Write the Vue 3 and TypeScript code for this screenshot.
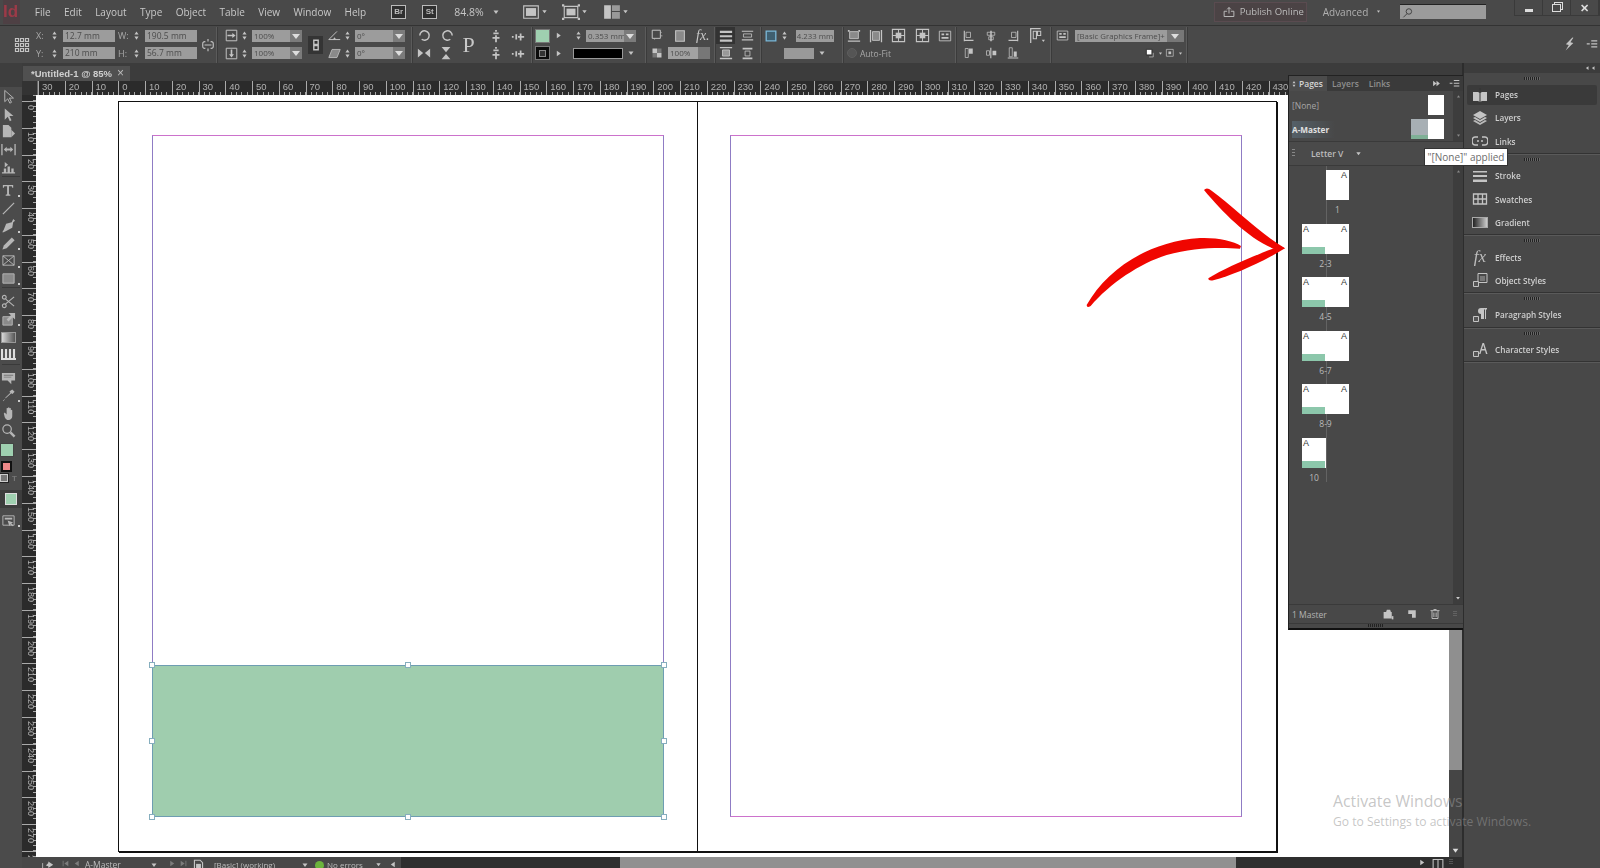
<script setup lang="ts">
import { h, type FunctionalComponent } from 'vue'

type Part = { d: string; fill?: string; stroke?: string; w?: number }
const F = (d: string, fill = 'currentColor'): Part => ({ d, fill })
const S = (d: string, w = 1): Part => ({ d, stroke: 'currentColor', w })

const icons: Record<string, Part[]> = {
  select: [S('M4 1.5v12l3.2-3 2.2 4.6 1.8-.9-2.2-4.5h4.3z')],
  direct: [F('M4 1.5v12l3.2-3 2.2 4.6 1.8-.9-2.2-4.5h4.3z')],
  page: [F('M2 1h6l3 3v10H2z'), F('M11 6l4 4-4 4z')],
  gap: [S('M1 2v12M15 2v12', 1.4), F('M3 8l3-3v2h4V5l3 3-3 3V9H6v2z')],
  collector: [F('M1 13h14v1.5H1z M3 9h2.5v4H3z M7 7h2.5v6H7z M11 9h2.5v4H11z M4 2l3.5 3L4 8z')],
  type: [F('M2 2h11v3h-1l-.5-1.5H8.5V12l1.5.5v1H5v-1l1.5-.5V3.5H3.5L3 5H2z')],
  line: [S('M2 14L14 2', 1.3)],
  pen: [F('M13 1l2 2-2 1.5-1 6L5 14l-3 1.5-.5-.5L5 9 6 8l-3.500 5.500L5.500 6l6-1.500z')],
  pencil: [F('M11.500 1.500l3 3-8.500 8.500-4.500 1.500 1.500-4.500z')],
  frame: [S('M2 3h12v10H2zM2 3l12 10M14 3L2 13')],
  rect: [{ d: 'M2 3h12v10H2z', fill: '#8a8a8a', stroke: 'currentColor', w: 1 }],
  scissors: [S('M5 5.500L14 13M5 10.500L14 3', 1.2), S('M1.500 3.500a2 2 0 1 0 4 0a2 2 0 1 0-4 0M1.500 12.500a2 2 0 1 0 4 0a2 2 0 1 0-4 0', 1.2)],
  free: [{ d: 'M2 5h10v9H2z', fill: '#8a8a8a', stroke: 'currentColor', w: 1 }, F('M8 1h7v7l-2.500-2.500L8 10 6 8l4.500-4.500z')],
  note: [F('M1 2h14v8h-4v4l-4-4H1z'), F('M3 4h10v1H3zM3 6h8v1H3z', '#777')],
  eyedrop: [F('M12 1.500l2.500 2.500-2 2-.5.5-1-1L5 11 2.500 14 2 13.500 5 11l-.5-.5L10 5 9 4l1-1z')],
  hand: [F('M3 8l1-1 2 2V2.500a1 1 0 0 1 1.500 0V7V1.800a1 1 0 0 1 1.500 0V7V2.500a1 1 0 0 1 1.500 0V8V4.500a1 1 0 0 1 1.500 0V11c0 2-1.500 4-4 4H8c-2 0-3-1-4-3z')],
  zoom: [S('M2 6.500a4.500 4.500 0 1 0 9 0a4.500 4.500 0 1 0-9 0', 1.3), S('M10 10l4.500 4.500', 2.600)],
  screen: [S('M2 3h12v10H2z'), F('M4 5h8v2H4z'), F('M7 8l6 2-2 1 2 2-1 1-2-2-1 2z')],
  spin: [F('M5 6.500L8 2l3 4.500zM5 9.500L8 14l3-4.500z')],
  ddown: [F('M3 5h10l-5 7z')],
  play: [F('M5 3l7 5-7 5z')],
  refpt: [S('M1.500 1.500h3v3h-3zM6.500 1.500h3v3h-3zM11.500 1.500h3v3h-3zM1.500 6.500h3v3h-3zM6.500 6.500h3v3h-3zM11.500 6.500h3v3h-3zM1.500 11.500h3v3h-3zM6.500 11.500h3v3h-3zM11.500 11.500h3v3h-3z', 1.200)],
  link: [S('M5 4.500a2 2 0 0 0-3 2v3a2 2 0 0 0 3 2M11 4.500a2 2 0 0 1 3 2v3a2 2 0 0 1-3 2M8 1v3M8 12v3M4 8h8', 1.300)],
  scalex: [S('M1.500 1.500h13v13h-13z', 1.200), F('M3 7h6V5l4 3-4 3V9H3z')],
  scaley: [S('M1.500 1.500h13M1.500 1.500v13h13v-13', 1.200), F('M7 3v6H5l3 4 3-4H9V3z')],
  chain: [S('M5.500 2.500h5v5h-5zM5.500 8.500h5v5h-5z', 1.600)],
  angle: [S('M1 13h14M1 13L11 3', 1.200), F('M6 13l2-3 2 3z')],
  shear: [{ d: 'M5 3h10l-4 10H1z', fill: '#8a8a8a', stroke: 'currentColor', w: 1 }],
  rotcw: [S('M3 8a5 5 0 1 1 2 4', 1.600)],
  rotccw: [S('M13 8a5 5 0 1 0-2 4', 1.600)],
  fliph: [F('M1 3l6 5-6 5zM15 3L9 8l6 5z')],
  flipv: [F('M3 1l5 6 5-6zM3 15l5-6 5 6z')],
  sel1: [F('M7 1h2v2H7zM5 4h6v2H5zM7 7h2v8H7zM4 9h8v2H4z')],
  sel2: [F('M1 8h2v2H1zM5 6h2v6H5zM8 8h7v2H8zM10 5h2v8h-2z')],
  corner: [S('M1.500 1.500h10v10h-10z', 1.200), F('M12 4h1v1h-1zM4 12h1v1H4zM12 8h2v1h-2z')],
  box: [{ d: 'M3 2h10v12H3z', fill: '#8a8a8a', stroke: 'currentColor', w: 1.200 }],
  opac: [F('M2 2h6v6H2zM8 8h6v6H8z'), F('M8 2h6v6H8zM2 8h6v6H2z', '#777')],
  wrap1: [F('M1 2h14v2.500H1zM1 7h14v2.500H1zM1 12h14v2.500H1z')],
  wrap2: [F('M1 2h14v1.500H1zM1 12.500h14V14H1z'), S('M3 6h10v4H3z')],
  wrap3: [F('M1 1h14v1.500H1zM1 13.500h14V15H1z'), { d: 'M4 4.500h8v7H4z', fill: '#999', stroke: 'currentColor', w: 1 }],
  wrap4: [F('M2 1h12v2H2zM2 13h12v2H2z'), S('M5 5h6v6H5z')],
  blueframe: [{ d: 'M2.500 2.500h11v11h-11z', fill: '#3f5f70', stroke: '#7ab8d8', w: 1.500 }],
  fit1: [{ d: 'M3 3h10v8H3z', fill: '#8a8a8a', stroke: 'currentColor', w: 1 }, F('M1 1h2v2H1zM13 1h2v2h-2zM1 13h14v1.500H1z')],
  fit2: [{ d: 'M4 3h8v10H4z', fill: '#8a8a8a', stroke: 'currentColor', w: 1 }, F('M1 1h1.500v14H1zM13.500 1H15v14h-1.500z')],
  fit3: [S('M1.500 1.500h13v13h-13z', 1.200), F('M5 5h6v6H5z'), F('M7.500 2h1v12h-1zM2 7.500h12v1H2z')],
  al1: [F('M1 1h1.500v14H1z M1 13h13v1.500H1z'), S('M4 3h6v7H4z')],
  al2: [F('M7 1h2v14H7z'), S('M3 3h10v4H3zM5 9h6v4H5z')],
  al3: [F('M13.500 1H15v14h-1.500z M2 13h13v1.500H2z'), S('M6 3h6v7H6z')],
  al4: [F('M1 1h10v1.200H1zM1 1h1.200v14H1z'), S('M4 4h3v7H4zM8 4h3v4H8z'), F('M12 12l3 0-1.500 2z')],
  al5: [S('M3 2h4v12H3z'), F('M8 2h5v7H8z')],
  al6: [F('M7 1h1.500v14H7z'), S('M2 5h4v6H2z'), F('M10 5h5v6h-5z')],
  al7: [S('M3 1h4v12H3z'), F('M9 6h4v7H9z M1 14h14v1.200H1z')],
  frametype: [S('M1.500 2.500h13v11h-13z'), F('M4 5h3v2H4zM9 5h3v2H9zM4 9h8v2H4z')],
  fr: [{ d: 'M2 2h8v8H2z', fill: '#fff', stroke: '#111', w: 1 }, S('M12 7v6H6')],
  fr2: [S('M2 2h10v10H2z'), F('M5 5h4v4H5z')],
  bolt: [F('M10 1L5 9h3l-2 6 6-9H9l2-5z')],
  menu: [F('M1 7h4v1.500H1zM7 3h8v1.500H7zM7 7h8v1.500H7zM7 11h8v1.500H7z')],
  forward: [F('M2 3l6 5-6 5zM8 3l6 5-6 5z')],
  share: [S('M1.500 7v7h13V7h-4M5.500 7h-4', 1.200), S('M8 10V2M5.500 4.500L8 2l2.500 2.500', 1.200)],
  search: [S('M6 6.500a4 4 0 1 0 8 0a4 4 0 1 0-8 0M7 10l-5 5', 1.200)],
  pages: [F('M1 5h5l2 1 2-1h5v9h-5l-2 1-2-1H1z'), F('M7.500 1h1v14h-1z', '#333')],
  layers: [F('M8 1l7 4-7 4-7-4z'), F('M1 8l2-1 5 3 5-3 2 1-7 4z'), F('M1 11l2-1 5 3 5-3 2 1-7 4z', '#bbb')],
  links: [S('M6 4H3a2.500 3.500 0 0 0 0 8h3M10 4h3a2.500 3.500 0 0 1 0 8h-3M5 8h2M9 8h2', 1.400)],
  stroke: [F('M1 3h14v1.500H1zM1 7h14v2H1zM1 11.500h14V14H1z')],
  swatches: [S('M1.500 3h13v10h-13zM1.500 8h13M6 3v10M10.500 3v10', 1.300)],
  objstyle: [S('M6 1.500h9v9H6z'), { d: 'M1.500 9.500h5v5h-5z', fill: '#555', stroke: 'currentColor', w: 1 }, F('M8 4h5v5H8z', '#777')],
  parastyle: [F('M9 1h6v1.500h-1V12h-1V2.500h-1V12H9V7a3 3 0 0 1 0-6z'), { d: 'M1.500 9.500h5v5h-5z', fill: '#555', stroke: 'currentColor', w: 1 }],
  charstyle: [F('M10.500 1h1.500l3.500 11H14l-1-3.500H9.500L8.500 12H7zM10 7h2.500L11.250 3z'), { d: 'M1.500 9.500h5v5h-5z', fill: '#555', stroke: 'currentColor', w: 1 }],
  newm: [F('M2 5h3l1-3h4l1 3h1v8H2z'), F('M12 10h2v4h-2z')],
  newp: [F('M2 2h12v12H8V8H2z')],
  trash: [S('M4 4v10h8V4M2 3.500h12M6 2h4M6.500 6v6M9.500 6v6', 1.200)],
  nav: [S('M2 5v9h10v-3'), F('M6 8l3-3V3l6 4-6 4V9z')],
  first: [F('M3 3h1.500v10H3zM13 3L6 8l7 5z')],
  prev: [F('M12 3L5 8l7 5z')],
  next: [F('M4 3l7 5-7 5z')],
  last: [F('M3 3l7 5-7 5zM11.500 3H13v10h-1.500z')],
  doc: [S('M3 1.500h7l3 3v10H3z', 1.400), F('M5 6h6v6H5z')],
  view: [S('M1.500 2h13v12h-13zM8 2v12', 1.400)],
  layout1: [S('M1.500 2.500h13v11h-13z'), F('M3.500 4.500h9v7h-9z')],
  layout2: [S('M2 3h12v10H2z'), F('M4 5h8v6H4z'), F('M0 1h2v2H0zM14 1h2v2h-2zM0 13h2v2H0zM14 13h2v2h-2z')],
  layout3: [F('M1 2h6v12H1z'), F('M8 2h7v5H8zM8 8h7v6H8z', '#999')],
  grip: [F('M1 2h2v2H1zM5 2h2v2H5zM1 6h2v2H1zM5 6h2v2H5zM1 10h2v2H1zM5 10h2v2H5z')],
}

const Ic: FunctionalComponent<{ n: string; s?: number }> = (p) =>
  h(
    'svg',
    { viewBox: '0 0 16 16', width: p.s ?? 13, height: p.s ?? 13, class: 'ic' },
    (icons[p.n] ?? []).map((x) =>
      h('path', { d: x.d, fill: x.fill ?? 'none', stroke: x.stroke ?? 'none', 'stroke-width': x.w ?? 0 }),
    ),
  )
Ic.props = ['n', 's']

const menus = ['File', 'Edit', 'Layout', 'Type', 'Object', 'Table', 'View', 'Window', 'Help']

const hLabels = [30, 20, 10, 0, ...Array.from({ length: 43 }, (_, i) => (i + 1) * 10)]
const vLabels = Array.from({ length: 29 }, (_, i) => i * 10)

const tools: { n?: string; css?: string; gap?: number; corner?: boolean }[] = [
  { n: 'select' }, { n: 'direct' }, { n: 'page' }, { n: 'gap' }, { n: 'collector', gap: 5 },
  { n: 'type', corner: true }, { n: 'line' }, { n: 'pen', corner: true }, { n: 'pencil', corner: true },
  { n: 'frame', corner: true }, { n: 'rect', corner: true, gap: 5 },
  { n: 'scissors' }, { n: 'free', corner: true }, { css: 'tool-grad' }, { css: 'tool-feather', gap: 5 },
  { n: 'note' }, { n: 'eyedrop', corner: true }, { n: 'hand' }, { n: 'zoom' },
]

const spreads = [
  { label: '1', left: false, right: true },
  { label: '2-3', left: true, right: true },
  { label: '4-5', left: true, right: true },
  { label: '6-7', left: true, right: true },
  { label: '8-9', left: true, right: true },
  { label: '10', left: true, right: false },
]

const dockGroups = [
  [{ n: 'pages', t: 'Pages', on: true }, { n: 'layers', t: 'Layers' }, { n: 'links', t: 'Links' }],
  [{ n: 'stroke', t: 'Stroke' }, { n: 'swatches', t: 'Swatches' }, { n: '', t: 'Gradient' }],
  [{ n: 'fx', t: 'Effects' }, { n: 'objstyle', t: 'Object Styles' }],
  [{ n: 'parastyle', t: 'Paragraph Styles' }],
  [{ n: 'charstyle', t: 'Character Styles' }],
]
</script>

<template>
  <div class="app">
    <header class="menubar">
      <span class="logo">Id</span>
      <nav class="menus"><span v-for="m in menus" :key="m">{{ m }}</span></nav>
      <span class="bridge br1">Br</span>
      <span class="bridge br2">St</span>
      <span class="zoomv">84.8%</span>
      <Ic n="ddown" :s="8" class="zoomdd" />
      <span class="lay l1"><Ic n="layout1" :s="18" /><Ic n="ddown" :s="7" /></span>
      <span class="lay l2"><Ic n="layout2" :s="18" /><Ic n="ddown" :s="7" /></span>
      <span class="lay l3"><Ic n="layout3" :s="18" /><Ic n="ddown" :s="7" /></span>
      <span class="publish"><Ic n="share" :s="12" />Publish Online</span>
      <span class="advanced">Advanced</span>
      <Ic n="ddown" :s="5" class="advdd" />
      <span class="search"><Ic n="search" :s="11" /></span>
      <span class="winbtns">
        <span class="win"><i class="w-min"></i></span>
        <span class="win"><i class="w-max"></i></span>
        <span class="win w-close">✕</span>
      </span>
    </header>

    <section class="ctrl">
      <div class="c c-ref"><Ic n="refpt" :s="16" /></div>

      <div class="c c-xy">
        <div class="r"><em>X:</em><Ic n="spin" :s="11" /><span class="fld w52">12.7 mm</span></div>
        <div class="r"><em>Y:</em><Ic n="spin" :s="11" /><span class="fld w52">210 mm</span></div>
      </div>
      <div class="c c-wh">
        <div class="r"><em>W:</em><Ic n="spin" :s="11" /><span class="fld w52">190.5 mm</span></div>
        <div class="r"><em>H:</em><Ic n="spin" :s="11" /><span class="fld w52">56.7 mm</span></div>
      </div>
      <div class="c c-link sep"><Ic n="link" :s="14" /></div>

      <div class="c c-scale">
        <div class="r"><Ic n="scalex" :s="13" /><Ic n="spin" :s="11" /><span class="fld w50 dd">100%</span></div>
        <div class="r"><Ic n="scaley" :s="13" /><Ic n="spin" :s="11" /><span class="fld w50 dd">100%</span></div>
      </div>
      <div class="c c-chain"><span class="chainbox"><Ic n="chain" :s="14" /></span></div>
      <div class="c c-angle sep">
        <div class="r"><Ic n="angle" :s="13" /><Ic n="spin" :s="11" /><span class="fld w50 dd">0°</span></div>
        <div class="r"><Ic n="shear" :s="13" /><Ic n="spin" :s="11" /><span class="fld w50 dd">0°</span></div>
      </div>

      <div class="c c-rot">
        <div class="r"><Ic n="rotcw" :s="15" /><Ic n="rotccw" :s="15" /></div>
        <div class="r"><Ic n="fliph" :s="14" /><Ic n="flipv" :s="14" /></div>
      </div>
      <div class="c c-p"><span class="pee">P</span></div>
      <div class="c c-sel sep">
        <div class="r"><Ic n="sel1" :s="14" /><Ic n="sel2" :s="14" /></div>
        <div class="r"><Ic n="sel1" :s="14" /><Ic n="sel2" :s="14" /></div>
      </div>

      <div class="c c-sw">
        <div class="r"><span class="swatch"></span><Ic n="play" :s="9" /></div>
        <div class="r"><span class="swatch black"><i></i></span><Ic n="play" :s="9" /></div>
      </div>
      <div class="c c-stroke sep">
        <div class="r ind"><Ic n="spin" :s="11" /><span class="fld w50 dd">0.353 mm</span></div>
        <div class="r"><span class="strokebar"></span><Ic n="ddown" :s="8" /></div>
      </div>

      <div class="c c-fx sep">
        <div class="r"><Ic n="corner" :s="13" /><Ic n="box" :s="14" /><span class="fx">fx.</span></div>
        <div class="r"><Ic n="opac" :s="12" /><span class="fld w42 pl">100%</span></div>
      </div>

      <div class="c c-wrap sep">
        <div class="r"><span class="press"><Ic n="wrap1" :s="14" /></span><Ic n="wrap2" :s="13" /></div>
        <div class="r"><span class="pressno"><Ic n="wrap3" :s="14" /></span><Ic n="wrap4" :s="13" /></div>
      </div>

      <div class="c c-inset sep">
        <div class="r"><Ic n="blueframe" :s="14" /><Ic n="spin" :s="11" /><span class="fld w38">4.233 mm</span></div>
        <div class="r ind2"><span class="fld w30 solid"></span><Ic n="ddown" :s="8" /></div>
      </div>

      <div class="c c-fit sep">
        <div class="r"><Ic n="fit1" :s="14" /><Ic n="fit2" :s="14" /><Ic n="fit3" :s="15" /><Ic n="fit3" :s="15" /><Ic n="frametype" :s="14" /></div>
        <div class="r auto"><i class="chk"></i>Auto-Fit</div>
      </div>

      <div class="c c-align sep">
        <div class="r"><Ic n="al1" :s="12" /><Ic n="al2" :s="12" /><Ic n="al3" :s="12" /><Ic n="al4" :s="17" /></div>
        <div class="r"><Ic n="al5" :s="12" /><Ic n="al6" :s="12" /><Ic n="al7" :s="12" /></div>
      </div>

      <div class="c c-style sep">
        <div class="r"><Ic n="frametype" :s="13" /><span class="fld w109">[Basic Graphics Frame]+<i class="ddbox"></i></span></div>
        <div class="r right"><Ic n="fr" :s="11" /><Ic n="ddown" :s="5" /><Ic n="fr2" :s="11" /><Ic n="ddown" :s="5" /></div>
      </div>

      <div class="ctrl-end"><Ic n="bolt" :s="16" /><Ic n="menu" :s="12" /></div>
    </section>

    <main class="body">
      <aside class="tools">
        <div class="tools-grip"></div>
        <div class="tools-list">
          <div v-for="(t, i) in tools" :key="i" class="tool" :class="{ gapped: t.gap, corner: t.corner }">
            <Ic v-if="t.n" :n="t.n" :s="15" />
            <i v-else :class="t.css"></i>
          </div>
          <div class="colors">
            <i class="fillbox"></i>
            <i class="strokemini"></i>
            <div class="fmt"><i></i><b>T</b></div>
          </div>
          <div class="applyc"><i></i></div>
          <div class="tool corner"><Ic n="screen" :s="15" /></div>
        </div>
      </aside>

      <div class="doc">
        <div class="tabband">
          <div class="tab">*Untitled-1 @ 85%<span class="tabx">×</span></div>
        </div>
        <div class="hruler">
          <div class="corner-box"></div>
          <div class="hticks">
            <span v-for="(l, i) in hLabels" :key="i">{{ l }}</span>
          </div>
        </div>
        <div class="work">
          <div class="vruler">
            <span v-for="l in vLabels" :key="l">{{ l }}</span>
          </div>
          <div class="canvas">
            <div class="spread">
              <div class="leaf one">
                <div class="guide">
                  <div class="frame">
                    <i class="hd tl"></i><i class="hd tm"></i><i class="hd tr"></i>
                    <i class="hd ml"></i><i class="hd mr"></i>
                    <i class="hd bl"></i><i class="hd bm"></i><i class="hd br"></i>
                  </div>
                </div>
              </div>
              <div class="leaf two"><div class="guide"></div></div>
            </div>
            <svg class="arrow" viewBox="0 0 720 450" width="240" height="150">
              <path fill="#f00600" d="M80 405C140 300 260 215 420 204C470 202 520 212 543 228L540 236C480 232 400 232 320 255C240 280 150 340 92 408Q80 415 80 405Z" />
              <path fill="#f00600" d="M432 60Q440 50 455 62C520 110 600 190 675 235L650 240C570 210 490 130 432 60Z" />
              <path fill="#f00600" d="M675 235L660 228C600 250 500 290 445 325Q445 334 460 331C520 315 600 280 675 235Z" />
            </svg>
          </div>
          <div class="vscroll">
            <span class="vthumb"></span>
            <Ic n="ddown" :s="9" class="vdown" />
          </div>
        </div>
        <footer class="status">
          <div class="st-left">
            <Ic n="nav" :s="13" class="st-nav" />
            <Ic n="first" :s="9" class="dim" />
            <Ic n="prev" :s="9" class="dim" />
            <span class="st-page">A-Master</span>
            <Ic n="ddown" :s="8" class="st-dd1" />
            <Ic n="next" :s="9" class="dim" />
            <Ic n="last" :s="9" class="dim" />
            <Ic n="doc" :s="13" class="st-doc" />
            <span class="st-prof">[Basic] (working)</span>
            <Ic n="ddown" :s="8" class="st-dd2" />
            <i class="dot"></i>
            <span class="st-err">No errors</span>
            <Ic n="ddown" :s="7" class="st-dd3" />
            <Ic n="prev" :s="9" class="st-lt" />
          </div>
          <div class="st-track"><span class="st-thumb"></span></div>
          <div class="st-right"><Ic n="next" :s="9" /><Ic n="view" :s="12" /><Ic n="grip" :s="8" class="dim" /></div>
        </footer>

        <section class="panel">
          <div class="p-tabs">
            <span class="p-tab on"><Ic n="spin" :s="8" />Pages</span>
            <span class="p-tab">Layers</span>
            <span class="p-tab">Links</span>
            <span class="p-tabs-end"><Ic n="forward" :s="9" /><Ic n="menu" :s="11" /></span>
          </div>
          <div class="p-masters">
            <div class="p-m-list">
              <div class="m-row"><span class="m-none">[None]</span><i class="m-thumb single"></i></div>
              <div class="m-row"><span class="m-a">A-Master</span><i class="m-thumb double"><b></b></i></div>
            </div>
            <div class="p-scroll"><Ic n="ddown" :s="5" class="flip" /><Ic n="ddown" :s="5" /></div>
          </div>
          <div class="p-letter"><span class="lg"></span><span class="lt">Letter V</span><Ic n="ddown" :s="7" /></div>
          <div class="p-list">
            <div class="p-spreads">
              <div v-for="s in spreads" :key="s.label" class="sp">
                <div class="sp-thumb">
                  <div class="pg-slot"><div v-if="s.left" class="pg left"><span>A</span><i></i></div></div>
                  <div class="pg-slot"><div v-if="s.right" class="pg right"><span>A</span></div></div>
                </div>
                <span class="sp-label" :class="{ r: s.label === '1', l: s.label === '10' }">{{ s.label }}</span>
              </div>
            </div>
            <div class="p-scroll big"><Ic n="ddown" :s="5" class="flip" /><Ic n="ddown" :s="6" /></div>
          </div>
          <div class="p-foot">
            <span class="ft">1 Master</span>
            <Ic n="newm" :s="13" /><Ic n="newp" :s="10" /><Ic n="trash" :s="12" /><Ic n="grip" :s="8" class="dim" />
          </div>
          <div class="p-grip"><i></i></div>
          <div class="tip">"[None]" applied</div>
        </section>
      </div>

      <aside class="dock">
        <div class="dock-top"><Ic n="prev" :s="6" /><Ic n="prev" :s="6" /></div>
        <div v-for="(g, i) in dockGroups" :key="i" class="dgroup">
          <div class="dgrip"></div>
          <div v-for="it in g" :key="it.t" class="ditem" :class="{ on: it.on }">
            <span v-if="it.n === 'fx'" class="dfx">fx</span>
            <i v-else-if="!it.n" class="dgrad"></i>
            <Ic v-else :n="it.n" :s="16" />
            <span>{{ it.t }}</span>
          </div>
        </div>
      </aside>
    </main>

    <div class="activate">
      <div class="a1">Activate Windows</div>
      <div class="a2">Go to Settings to activate Windows.</div>
    </div>
  </div>
</template>

<style>
html, body { margin: 0; padding: 0; background: #484848; }
</style>

<style scoped>
.app { width: 1600px; height: 868px; position: relative; overflow: hidden; background: #484848; color: #c6c6c6; font: 10px "Open Sans", "Liberation Sans", sans-serif; display: flex; flex-direction: column; }
.ic { display: block; flex: none; color: #c4c4c4; }
.dim { color: #7c7c7c; }

.menubar { height: 26px; flex: none; display: flex; align-items: center; background: #494949; border-bottom: 1px solid #333; box-sizing: border-box; padding-bottom: 2px; position: relative; filter: blur(.3px); }
.logo { width: 18px; color: #9c3a48; font: 700 17px "Liberation Sans", sans-serif; margin-left: 3px; background: #4e4044; height: 25px; line-height: 25px; overflow: hidden; }
.menus { display: flex; gap: 13.400px; margin-left: 15px; font-size: 10px; color: #c8c8c8; }
.bridge { flex: none; width: 13px; height: 12px; border: 1px solid #bbb; background: #2f2f2f; color: #bbb; font: 700 8px/12px "Liberation Sans", sans-serif; text-align: center; }
.br1 { margin-left: 25px; }
.br2 { margin-left: 16px; }
.zoomv { margin-left: 17px; font-size: 10.500px; }
.zoomdd { margin-left: 8px; }
.lay { display: flex; align-items: center; gap: 1px; }
.l1 { margin-left: 22px; }
.l2 { margin-left: 14px; }
.l3 { margin-left: 15px; }
.publish { margin-left: 585px; width: 93px; height: 20px; box-sizing: border-box; border: 1px solid #5a4b50; background: #4b4345; display: flex; align-items: center; gap: 5px; padding-left: 8px; font-size: 9.500px; color: #bcbcbc; white-space: nowrap; flex: none; }
.advanced { margin-left: 16px; font-size: 10px; color: #b0b0b0; }
.advdd { margin-left: 8px; }
.search { margin-left: 19px; width: 92px; height: 14px; background: #9b9b9b; border-top: 1px solid #222; display: flex; align-items: center; }
.search .ic { color: #333; margin-left: 2px; }
.winbtns { margin-left: 28px; align-self: flex-start; display: flex; height: 15px; border: 1px solid #3a3a3a; border-top: 0; }
.win { width: 27px; height: 15px; border-right: 1px solid #3a3a3a; display: flex; align-items: center; justify-content: center; font-size: 11px; font-weight: 700; color: #ddd; }
.w-min { width: 8px; height: 3px; background: #ddd; margin-top: 5px; }
.w-max { width: 7px; height: 6px; border: 1px solid #ddd; box-shadow: 2px -2px 0 -1px #484848, 2px -2px 0 0 #ddd; }

.ctrl { height: 37px; flex: none; display: flex; align-items: stretch; background: #494949; box-sizing: border-box; padding-top: 1px; filter: blur(.3px); position: relative; }
.c { flex: none; display: flex; flex-direction: column; box-sizing: border-box; }
.r { height: 17.500px; display: flex; align-items: center; gap: 1px; }
.r em { font-style: normal; font-size: 9px; color: #a8a8a8; width: 12px; flex: none; }
.sep { border-right: 1px solid #5b5b5b; box-shadow: 1px 0 0 #3b3b3b; }
.fld { flex: none; box-sizing: border-box; height: 12px; background: #9c9c9c; color: #4d4d4d; font-size: 8.500px; line-height: 12px; padding-left: 2px; white-space: nowrap; overflow: hidden; position: relative; }
.w52 { width: 52px; margin-left: 2px; }
.w50 { width: 50px; margin-left: 1px; }
.w42 { width: 42px; margin-left: 5px; background: linear-gradient(90deg, #a2a2a2 72%, #777 72%); }
.w38 { width: 38px; margin-left: 5px; text-align: center; padding: 0; font-size: 7.800px; }
.w30 { width: 30px; }
.w109 { width: 109px; margin-left: 5px; background: linear-gradient(90deg, #9c9c9c 84%, #777 84%); font-size: 7.800px; }
.solid { background: #999; height: 11px; }
.dd { font-size: 8px; }
.dd::after { content: ""; position: absolute; right: 0; top: 0; width: 12px; height: 12px; background: linear-gradient(#7b7b7b, #7b7b7b); }
.dd::before { content: ""; position: absolute; right: 2px; top: 4px; z-index: 1; border: 4px solid transparent; border-top: 5px solid #ddd; border-bottom: 0; }
.ddbox { position: absolute; right: 5px; top: 4px; border: 4px solid transparent; border-top: 5px solid #ddd; border-bottom: 0; }
.c-ref { width: 36px; align-items: flex-start; justify-content: center; padding-left: 14px; }
.c-xy { width: 80px; }
.c-wh { width: 81px; padding-left: 2px; }
.c-link { width: 20px; justify-content: center; padding-left: 4px; }
.c-scale { width: 91px; padding-left: 8px; }
.c-chain { width: 17px; justify-content: center; }
.chainbox { width: 15px; height: 18px; background: #343434; display: flex; align-items: center; justify-content: center; }
.c-angle { width: 87px; padding-left: 3px; }
.c-rot { width: 48px; padding-left: 5px; }
.c-rot .r { gap: 8px; }
.c-p { width: 17px; align-items: center; justify-content: center; }
.pee { font: 22px "Liberation Serif", serif; color: #c8c8c8; line-height: 22px; }
.c-sel { width: 55px; padding-left: 12px; }
.c-sel .r { gap: 8px; }
.c-sw { width: 41px; padding-left: 3px; }
.c-sw .r { gap: 4px; }
.swatch { width: 15px; height: 14px; background: #9fd0b0; border: 1px solid #777; box-sizing: border-box; flex: none; }
.swatch.black { background: #0c0c0c; display: flex; align-items: center; justify-content: center; }
.swatch.black i { width: 5px; height: 5px; border: 1px solid #888; background: #333; }
.c-stroke { width: 73px; }
.ind { gap: 2px; }
.ind .fld { margin-left: 0; }
.strokebar { width: 48px; height: 9px; background: #000; border: 1px solid #999; margin-right: 3px; }
.c-fx { width: 69px; padding-left: 5px; }
.c-fx .r { gap: 9px; }
.c-fx .r + .r { gap: 0; }
.fx { font: italic 14px "Liberation Serif", serif; color: #c8c8c8; }
.pl { font-size: 8px; }
.c-wrap { width: 46px; padding-left: 1px; }
.c-wrap .r { gap: 6px; }
.press { width: 19px; height: 17px; background: #333; display: flex; align-items: center; justify-content: center; }
.pressno { width: 19px; height: 17px; display: flex; align-items: center; justify-content: center; }
.c-inset { width: 82px; padding-left: 3px; }
.ind2 { padding-left: 20px; gap: 4px; }
.c-fit { width: 113px; padding-left: 4px; }
.c-fit .r { gap: 8.200px; }
.auto { gap: 3px !important; font-size: 8.500px; color: #a8a8a8; }
.chk { width: 8px; height: 8px; border-radius: 50%; background: #555; border: 1px solid #5e5e5e; }
.c-align { width: 95px; padding-left: 7px; }
.c-align .r { gap: 10px; }
.c-style { width: 136px; padding-left: 5px; }
.right { justify-content: flex-end; padding-right: 3px; gap: 2px; }
.ctrl-end { margin-left: auto; display: flex; align-items: center; gap: 9px; padding-right: 2px; padding-bottom: 3px; }
.ctrl-end .ic:first-child { transform: rotate(12deg); }

.body { flex: 1; display: flex; min-height: 0; }
.tools { width: 22px; flex: none; background: #4b4b4b; display: flex; flex-direction: column; filter: blur(.3px); }
.tools .ic { color: #b6b6b6; }
.tools-grip { height: 24px; flex: none; background: #3e3e3e; }
.tools-list { display: flex; flex-direction: column; margin-top: 1px; }
.tool { height: 17.600px; flex: none; display: flex; align-items: center; justify-content: center; position: relative; padding-right: 5px; }
.tool.gapped { margin-bottom: 5.800px; box-shadow: 0 3px 0 -2px #3a3a3a; }
.tool.corner::after { content: ""; position: absolute; right: 2px; bottom: 2px; width: 2px; height: 2px; background: #ccc; }
.tool-grad { width: 15px; height: 11px; background: linear-gradient(90deg, #d8d8d8, #555); border: 1px solid #999; box-sizing: border-box; }
.tool-feather { width: 15px; height: 11px; background: repeating-linear-gradient(90deg, #ddd 0 2px, #555 2px 4px); border-bottom: 2px solid #ddd; box-sizing: border-box; }
.colors { display: flex; flex-direction: column; height: 42px; margin-top: 3px; }
.fillbox { width: 12px; height: 12px; background: #9fd0b0; border: 1px solid #444; margin-left: 0; }
.strokemini { width: 7px; height: 7px; background: #e88; border: 2px solid #111; margin: 4px 0 0 1px; }
.fmt { display: flex; align-items: center; gap: 4px; margin-top: 2px; }
.fmt i { width: 6px; height: 6px; border: 1px solid #ccc; background: #777; box-shadow: 0 0 0 1px #222; }
.fmt b { font: 700 8px "Liberation Sans", sans-serif; color: #777; }
.applyc { height: 18px; background: #3d3d3d; display: flex; align-items: center; justify-content: center; margin-top: 5px; }
.applyc i { width: 10px; height: 10px; background: #9fd0b0; border: 1px solid #ddd; }
.applyc + .tool { margin-top: 4px; }

.doc { flex: 1; min-width: 0; display: flex; flex-direction: column; position: relative; }
.tabband { height: 18px; flex: none; background: #3c3c3c; display: flex; align-items: flex-end; padding-left: 1px; }
.tab { width: 107px; height: 15px; background: #505050; color: #d0d0d0; font: 700 9.500px/15px "Liberation Sans", sans-serif; padding-left: 8px; box-sizing: border-box; white-space: nowrap; position: relative; filter: blur(.3px); }
.tabx { position: absolute; right: 6px; top: 0; color: #bbb; font-weight: 400; font-size: 12px; line-height: 14px; }

.hruler { height: 14px; flex: none; display: flex; background: #2b2b2b; overflow: hidden; }
.corner-box { width: 16px; flex: none; background: #333; box-shadow: inset -1px 0 0 #666; }
.hticks { display: flex; flex: 1; min-width: 0; background: repeating-linear-gradient(90deg, #aaa 0 1px, transparent 1px 5.350px) 0 100% / 100% 3px no-repeat; filter: blur(.3px); }
.hticks span { flex: none; width: 26.750px; box-sizing: border-box; border-left: 1px solid #aaa; padding-left: 3px; font: 9.500px/12px "Liberation Sans", sans-serif; color: #b0b0b0; }

.work { flex: 1; min-height: 0; display: flex; }
.vruler { width: 14px; flex: none; background: #2b2b2b repeating-linear-gradient(180deg, #aaa 0 1px, transparent 1px 5.358px) 100% 0 / 3px 100% no-repeat; padding-top: 6px; box-sizing: border-box; overflow: hidden; display: flex; flex-direction: column; filter: blur(.3px); }
.vruler span { flex: none; height: 26.790px; box-sizing: border-box; border-top: 1px solid #aaa; padding-top: 3px; writing-mode: vertical-rl; font: 9px/11px "Liberation Sans", sans-serif; color: #b0b0b0; }
.canvas { flex: 1; min-width: 0; background: #fff; position: relative; overflow: hidden; }
.spread { position: absolute; left: 82px; top: 6px; width: 1159px; height: 751px; box-sizing: border-box; border: 1px solid #111; box-shadow: 1px 1px 0 #111; display: flex; }
.leaf { box-sizing: border-box; display: flex; padding: 33px 33px 34px 33px; }
.leaf.one { width: 579px; border-right: 1px solid #111; }
.leaf.two { flex: 1; padding-left: 32px; padding-right: 34px; }
.guide { flex: 1; box-sizing: border-box; border: 1px solid #cc72cc; border-left-color: #8f7cc4; border-right-color: #8f7cc4; display: flex; flex-direction: column; justify-content: flex-end; }
.frame { height: 152px; margin: -1px; background: #9fcdae; border: 1.500px solid #6e9db2; box-sizing: border-box; position: relative; }
.hd { position: absolute; width: 6px; height: 6px; box-sizing: border-box; background: #fff; border: 1px solid #86aebe; }
.tl { left: -4px; top: -4px; } .tm { left: 50%; top: -4px; margin-left: -3px; } .tr { right: -4px; top: -4px; }
.ml { left: -4px; top: 50%; margin-top: -3px; } .mr { right: -4px; top: 50%; margin-top: -3px; }
.bl { left: -4px; bottom: -4px; } .bm { left: 50%; bottom: -4px; margin-left: -3px; } .br { right: -4px; bottom: -4px; }
.arrow { position: absolute; left: 1024px; top: 75px; }
.vscroll { width: 13px; flex: none; background: #454545; position: relative; }
.vthumb { position: absolute; left: 0; right: 0; top: 535px; height: 140px; background: #8f8f8f; }
.vdown { position: absolute; left: 2px; bottom: 2px; color: #ddd; }

.status { height: 11px; flex: none; display: flex; overflow: hidden; background: #2f2f2f; filter: blur(.25px); }
.st-left { width: 379px; flex: none; display: flex; align-items: flex-start; background: #484848; font-size: 8.500px; padding-top: 2px; box-sizing: border-box; padding-left: 19px; position: relative; color: #bdbdbd; }
.st-left > * { flex: none; }
.st-nav { margin-right: 7px; }
.st-left .dim { margin-right: 2px; }
.st-page { margin-left: 2px; width: 65px; line-height: 11px; }
.st-dd1 { margin: 2px 10px 0 0; }
.st-doc { margin: 0 9px 0 2px; }
.st-prof { width: 84px; line-height: 11px; font-size: 8px; }
.st-dd2 { margin: 2px 6px 0 3px; }
.dot { width: 9px; height: 9px; border-radius: 50%; background: #6cb43c; margin-top: 2px; }
.st-err { margin-left: 1px; width: 50px; padding-left: 2px; line-height: 11px; box-sizing: border-box; font-size: 8px; }
.st-dd3 { margin-top: 2px; }
.st-lt { margin-left: 6px; margin-top: 1px; }
.st-track { flex: 1; background: #2f2f2f; padding-left: 219px; }
.st-thumb { display: block; width: 616px; height: 11px; background: #909090; }
.st-right { width: 44px; flex: none; display: flex; align-items: flex-start; gap: 5px; padding-top: 1px; box-sizing: border-box; margin-left: -2px; }

.panel { position: absolute; z-index: 3; left: 1266px; top: 12px; width: 175px; height: 555px; background: #484848; box-sizing: border-box; border-left: 1px solid #222; border-bottom: 2px solid #111; border-top: 1px solid #222; display: flex; flex-direction: column; filter: blur(.2px); }
.p-tabs { height: 15px; flex: none; display: flex; align-items: center; background: #3a3a3a; font-size: 8.500px; color: #8e8e8e; font-weight: 600; }
.p-tab { height: 15px; line-height: 15px; display: flex; align-items: center; padding: 0 5px 0 0; margin-left: 5px; }
.p-tab.on { background: #4c4c4c; color: #d4d4d4; margin-left: 0; gap: 1px; padding-left: 1px; width: 38px; box-sizing: border-box; }
.p-tabs-end { margin-left: auto; display: flex; align-items: center; gap: 8px; padding-right: 3px; }
.p-masters { height: 50px; flex: none; display: flex; border-bottom: 1px solid #3a3a3a; }
.p-m-list { flex: 1; display: flex; flex-direction: column; padding-top: 2px; }
.m-row { height: 24px; display: flex; align-items: center; justify-content: space-between; padding: 0 9px 0 3px; }
.m-none { color: #a6a6a6; font-size: 8.500px; }
.m-a { color: #e0e0e0; font-weight: 700; font-size: 8.200px; background: linear-gradient(90deg, #556068, #484848); padding: 3px 6px 3px 0; }
.m-thumb { display: block; height: 20px; background: #fff; position: relative; }
.m-thumb.single { width: 16px; }
.m-thumb.double { width: 33px; }
.m-thumb.double b { position: absolute; left: 0; top: 0; bottom: 0; width: 17px; background: linear-gradient(#a7afb4 78%, #7fb096 78%); }
.p-scroll { width: 10px; flex: none; background: #3d3d3d; display: flex; flex-direction: column; justify-content: space-between; align-items: center; padding: 3px 0; box-sizing: border-box; }
.p-scroll .ic { color: #8a8a8a; }
.p-scroll.big .ic:last-child { color: #ccc; }
.flip { transform: rotate(180deg); }
.p-letter { height: 23px; flex: none; display: flex; align-items: center; border-bottom: 1px solid #3a3a3a; color: #bdbdbd; font-size: 8.500px; background: #4a4a4a; }
.lg { width: 3px; height: 9px; margin-left: 3px; background: repeating-linear-gradient(#888 0 1px, transparent 1px 3px); }
.lt { margin-left: 16px; width: 44px; font-weight: 600; }
.p-list { flex: 1; min-height: 0; display: flex; }
.p-spreads { flex: 1; padding: 4px 0 0 13px; position: relative; }
.p-spreads::before { content: ""; position: absolute; left: 37px; top: 0; height: 316px; width: 1px; background: #636363; }
.sp { height: 53.500px; width: 47px; position: relative; }
.sp-thumb { display: flex; height: 30px; }
.pg-slot { width: 24px; position: relative; flex: none; }
.pg-slot + .pg-slot { width: 23px; }
.pg { height: 30px; background: #fff; position: relative; overflow: hidden; }
.pg span { position: absolute; top: 0; font: 9px/11px "Liberation Sans", sans-serif; color: #333; }
.pg.left span { left: 1px; }
.pg.right span { right: 2px; }
.pg i { position: absolute; left: 0; right: 1px; bottom: 0; height: 7px; background: #8cc7ab; }
.sp-label { display: block; text-align: center; font-size: 8.500px; line-height: 13px; margin-top: 3px; color: #bbb; position: relative; }
.sp-label.r { padding-left: 24px; }
.sp-label.l { padding-right: 23px; }
.p-foot { height: 19px; flex: none; display: flex; align-items: center; border-top: 1px solid #3a3a3a; box-sizing: border-box; font-size: 8.500px; color: #b4b4b4; gap: 12px; padding-right: 2px; }
.ft { width: 86px; padding-left: 3px; box-sizing: border-box; }
.p-grip { height: 4px; flex: none; border-top: 1px solid #3a3a3a; display: flex; justify-content: center; }
.p-grip i { width: 16px; height: 3px; background: repeating-linear-gradient(90deg, #222 0 1px, transparent 1px 2px); }
.tip { position: absolute; left: 135px; top: 72px; width: 84px; height: 18px; box-sizing: border-box; background: #fff; color: #6c6c6c; border: 1px solid #333; font: 10px/16px "Open Sans", sans-serif; text-align: center; white-space: nowrap; z-index: 5; }

.dock { width: 138px; flex: none; background: #484848; box-sizing: border-box; border-left: 2px solid #2d2d2d; filter: blur(.25px); }
.dock-top { height: 10px; display: flex; justify-content: flex-end; padding-right: 4px; background: #3c3c3c; align-items: center; }
.dgroup { box-sizing: border-box; padding: 3px 0 .3px; border-bottom: 1px solid #333; box-shadow: 0 1px 0 #5a5a5a; }
.dgrip { height: 3px; width: 16px; margin: 1px auto 3px; background: repeating-linear-gradient(90deg, #222 0 1px, #666 1px 2px); }
.ditem { height: 23.300px; display: flex; align-items: center; font-size: 8.200px; font-weight: 600; color: #cfcfcf; padding-left: 8px; box-sizing: border-box; gap: 7px; position: relative; }
.ditem.on::before { content: ""; position: absolute; left: 3px; right: 3px; top: 2px; bottom: 1px; background: #3a3a3a; border-radius: 2px; }
.ditem > * { position: relative; }
.dfx { width: 16px; font: italic 17px/18px "Liberation Serif", serif; color: #bdbdbd; text-align: center; }
.dgrad { width: 16px; height: 11px; background: linear-gradient(90deg, #222, #ccc); border: 1px solid #aaa; box-sizing: border-box; }

.activate { position: absolute; z-index: 4; left: 1333px; top: 790px; color: rgba(150, 150, 150, .55); pointer-events: none; font-family: "Open Sans", sans-serif; white-space: nowrap; }
.a1 { font-size: 15.800px; line-height: 22px; }
.a2 { font-size: 12.100px; line-height: 16px; margin-top: 2px; }
</style>
